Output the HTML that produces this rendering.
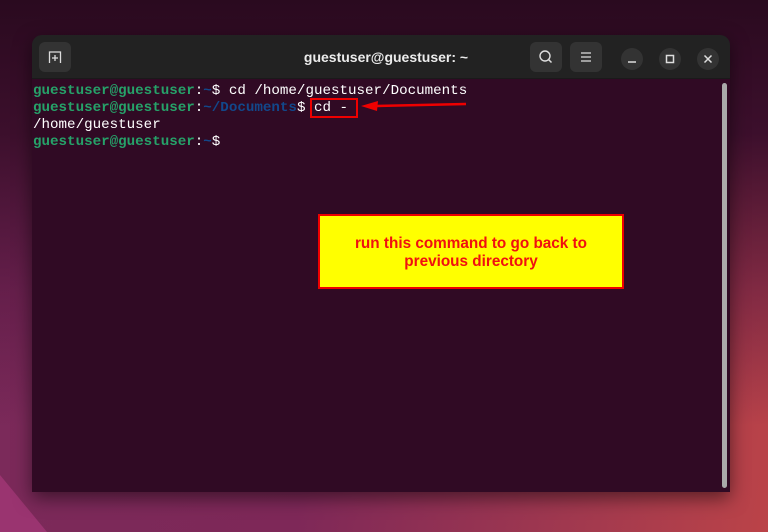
<!DOCTYPE html>
<html><head><style>
*{margin:0;padding:0;box-sizing:border-box}
body{width:768px;height:532px;overflow:hidden;position:relative;
background:linear-gradient(100deg,#7a2a5a 0%,#7e2858 45%,#a43a4e 80%,#bb4348 100%);}
.topshade{position:absolute;left:0;top:0;width:768px;height:532px;
background:linear-gradient(180deg,#2a0a1f 0%,#3c0f2c 25%,rgba(80,20,60,0.5) 55%,rgba(0,0,0,0) 80%);}
.tri{position:absolute;left:0;top:0;width:768px;height:532px;background:#9a3470;clip-path:polygon(0 475px,47px 532px,0 532px)}
.win{position:absolute;left:32px;top:35px;width:698px;height:457px;background:#300a24;border-radius:10px 10px 0 0;overflow:hidden;box-shadow:0 6px 18px rgba(0,0,0,.5)}
.tb{height:44px;background:#222222;position:relative;border-bottom:1px solid #1a1a1a}
.btn{position:absolute;top:7px;width:32px;height:30px;background:#333;border-radius:6px}
.cb{position:absolute;top:13px;width:22px;height:22px;background:#333;border-radius:50%}
.title{position:absolute;left:0;right:0;top:14px;text-align:center;color:#ececec;font:bold 14px "Liberation Sans",sans-serif;padding-left:10px}
.term{position:absolute;left:1px;top:48px;font:14.2px/17px "Liberation Mono",monospace;color:#fff;white-space:pre}
.g{color:#26a269;font-weight:bold}.b{color:#12488b;font-weight:bold}
.sb{position:absolute;left:690px;top:48px;width:5px;height:405px;background:#aaa;border-radius:3px}
.yb{position:absolute;left:318px;top:214px;width:306px;height:75px;background:#ffff00;border:2px solid #e00;color:#f01010;font:bold 15.3px/18px "Liberation Sans",sans-serif;text-align:center;padding-top:19px}
.rb{position:absolute;left:310px;top:98px;width:48px;height:20px;border:2px solid #e00}
</style></head><body>
<div class="topshade"></div>
<div class="tri"></div>
<div class="win">
 <div class="tb">
  <div class="btn" style="left:7px"><svg width="32" height="30"><path d="M10.5 21V10h11v11" fill="none" stroke="#ddd" stroke-width="1.3"/><path d="M16 13v6M13 16h6" stroke="#ddd" stroke-width="1.3"/></svg></div>
  <div class="title">guestuser@guestuser: ~</div>
  <div class="btn" style="left:498px"><svg width="32" height="30"><circle cx="15" cy="14" r="5" fill="none" stroke="#ddd" stroke-width="1.4"/><path d="M18.5 17.5l3 3" stroke="#ddd" stroke-width="1.5"/></svg></div>
  <div class="btn" style="left:538px"><svg width="32" height="30"><path d="M11 11h10M11 15h10M11 19h10" stroke="#ddd" stroke-width="1.3"/></svg></div>
  <div class="cb" style="left:589px"><svg width="22" height="22"><path d="M7 14h8" stroke="#ddd" stroke-width="1.5"/></svg></div>
  <div class="cb" style="left:627px"><svg width="22" height="22"><rect x="7.5" y="7.5" width="7" height="7" fill="none" stroke="#ddd" stroke-width="1.5"/></svg></div>
  <div class="cb" style="left:665px"><svg width="22" height="22"><path d="M7.5 7.5l7 7M14.5 7.5l-7 7" stroke="#ddd" stroke-width="1.5"/></svg></div>
 </div>
 <div class="term"><span class="g">guestuser@guestuser</span>:<span class="b">~</span>$ cd /home/guestuser/Documents
<span class="g">guestuser@guestuser</span>:<span class="b">~/Documents</span>$ cd -
/home/guestuser
<span class="g">guestuser@guestuser</span>:<span class="b">~</span>$</div>
 <div class="sb"></div>
</div>
<div class="rb"></div>
<svg style="position:absolute;left:358px;top:98px" width="112" height="16"><path d="M18 8L108 6" stroke="#e00" stroke-width="2.5"/><path d="M3 8L20 3L19 13Z" fill="#e00"/></svg>
<div class="yb">run this command to go back to<br>previous directory</div>
</body></html>
